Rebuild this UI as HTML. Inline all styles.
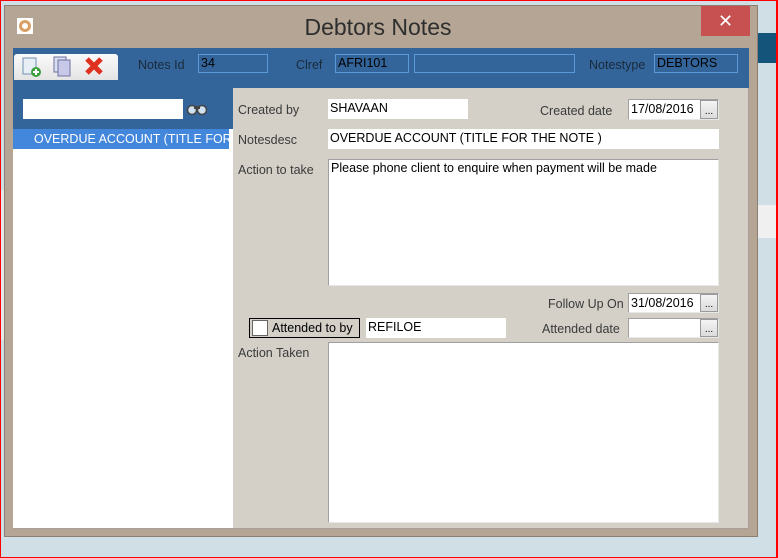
<!DOCTYPE html>
<html><head><style>
*{margin:0;padding:0;box-sizing:border-box}
body{width:778px;height:558px;position:relative;overflow:hidden;background:#d0dee5;font-family:"Liberation Sans",sans-serif;font-size:12px;color:#333}
.a{position:absolute}
.inp{position:absolute;background:#fff;border:1px solid #a0a0a0;border-right-color:#e8e8e8;border-bottom-color:#e8e8e8;padding-left:2px;color:#000;font-size:12.5px;line-height:19px;white-space:nowrap;overflow:hidden}
.bf{position:absolute;border:1px solid #5a9ad8;background:#34659a;color:#000;padding-left:2px;font-size:12.5px;line-height:17px}
.lbl{position:absolute;color:#3a3a3a;font-size:12.5px}
.btn{position:absolute;width:18px;background:linear-gradient(#f4f4f4,#dcdcdc);border:1px solid #999;font-size:10px;text-align:center;line-height:22px;color:#000}
</style></head><body>
<div class="a" style="left:0;top:0;width:778px;height:558px;border:1px solid red;border-right-width:2px;z-index:9;pointer-events:none"></div>
<div class="a" style="left:758px;top:33px;width:18px;height:30px;background:#15547a"></div>
<div class="a" style="left:758px;top:205px;width:18px;height:33px;background:#f0f0f0"></div>
<div class="a" style="left:1px;top:190px;width:3px;height:150px;background:#e8e8e8"></div>
<div class="a" style="left:4px;top:5px;width:754px;height:532px;background:#b4a594;border:1px solid #8c7f72"></div>
<div class="a" style="left:17px;top:18px;width:16px;height:16px;background:#fff"><div style="margin:2px;width:12px;height:12px;border-radius:50%;border:3px solid #d9a066"></div></div>
<div class="a" style="left:0;top:14px;width:756px;text-align:center;font-size:23px;color:#2e2e2e">Debtors Notes</div>
<div class="a" style="left:701px;top:6px;width:49px;height:30px;background:#c75050;color:#fff;text-align:center;font-size:18px;line-height:30px">✕</div>
<div class="a" style="left:13px;top:48px;width:736px;height:481px;background:#d4d0c8;border:1px solid #a8a098"></div>
<div class="a" style="left:13px;top:48px;width:736px;height:40px;background:#34659a"></div>
<div class="a" style="left:14px;top:54px;width:104px;height:26px;background:linear-gradient(#fafafa,#e4e4e4);border-radius:3px 3px 0 0">
<svg width="104" height="26"><rect x="9" y="4" width="13" height="16" fill="#e8eef6" stroke="#7090b0"/><circle cx="22" cy="18" r="5" fill="#3ca03c"/><path d="M19 18h6M22 15v6" stroke="#fff" stroke-width="2"/><rect x="40" y="3" width="12" height="15" fill="#d8e0f0" stroke="#7070a0"/><rect x="44" y="6" width="12" height="16" fill="#c8c8e8" stroke="#7070a0"/><path d="M73 5l14 14M87 5l-14 14" stroke="#e03020" stroke-width="5"/></svg></div>
<div class="lbl" style="left:138px;top:58px;color:#1a2a3a">Notes Id</div>
<div class="bf" style="left:198px;top:54px;width:70px;height:19px">34</div>
<div class="lbl" style="left:296px;top:58px;color:#1a2a3a">Clref</div>
<div class="bf" style="left:335px;top:54px;width:74px;height:19px">AFRI101</div>
<div class="bf" style="left:414px;top:54px;width:161px;height:19px"></div>
<div class="lbl" style="left:589px;top:58px;color:#1a2a3a">Notestype</div>
<div class="bf" style="left:654px;top:54px;width:84px;height:19px">DEBTORS</div>
<div class="a" style="left:13px;top:88px;width:220px;height:41px;background:#34659a"></div>
<div class="a" style="left:13px;top:129px;width:220px;height:399px;background:#fff"></div>
<div class="a" style="left:23px;top:99px;width:160px;height:20px;background:#fff"></div>
<svg class="a" style="left:186px;top:103px" width="22" height="12"><circle cx="6" cy="7" r="4.5" fill="#cfe0f0" stroke="#444" stroke-width="1.5"/><circle cx="16" cy="7" r="4.5" fill="#cfe0f0" stroke="#444" stroke-width="1.5"/><rect x="8" y="3" width="6" height="3" fill="#444"/></svg>
<div class="a" style="left:13px;top:129px;width:216px;height:20px;background:#4287dc;color:#fff;padding-left:21px;line-height:20px;font-size:12.5px;white-space:nowrap;overflow:hidden">OVERDUE ACCOUNT (TITLE FOR THE NOTE )</div>
<div class="lbl" style="left:238px;top:103px">Created by</div>
<div class="inp" style="left:328px;top:99px;width:140px;height:20px;border:none">SHAVAAN</div>
<div class="lbl" style="left:540px;top:104px">Created date</div>
<div class="inp" style="left:628px;top:99px;width:91px;height:21px">17/08/2016</div>
<div class="btn" style="left:700px;top:100px;height:19px;line-height:22px">...</div>
<div class="lbl" style="left:238px;top:133px">Notesdesc</div>
<div class="inp" style="left:328px;top:129px;width:391px;height:20px;border:none">OVERDUE ACCOUNT (TITLE FOR THE NOTE )</div>
<div class="lbl" style="left:238px;top:163px">Action to take</div>
<div class="inp" style="left:328px;top:159px;width:391px;height:127px;line-height:17px">Please phone client to enquire when payment will be made</div>
<div class="lbl" style="left:548px;top:297px">Follow Up On</div>
<div class="inp" style="left:628px;top:293px;width:91px;height:20px">31/08/2016</div>
<div class="btn" style="left:700px;top:294px;height:18px;line-height:20px">...</div>
<div class="a" style="left:249px;top:318px;width:111px;height:20px;border:1px solid #000"></div>
<div class="a" style="left:252px;top:320px;width:16px;height:16px;background:#fff;border:1px solid #666"></div>
<div class="lbl" style="left:272px;top:321px;color:#000">Attended to by</div>
<div class="inp" style="left:366px;top:318px;width:140px;height:20px;border:none">REFILOE</div>
<div class="lbl" style="left:542px;top:322px">Attended date</div>
<div class="inp" style="left:628px;top:318px;width:91px;height:20px"></div>
<div class="btn" style="left:700px;top:319px;height:18px;line-height:20px">...</div>
<div class="lbl" style="left:238px;top:346px">Action Taken</div>
<div class="inp" style="left:328px;top:342px;width:391px;height:181px"></div>
</body></html>
